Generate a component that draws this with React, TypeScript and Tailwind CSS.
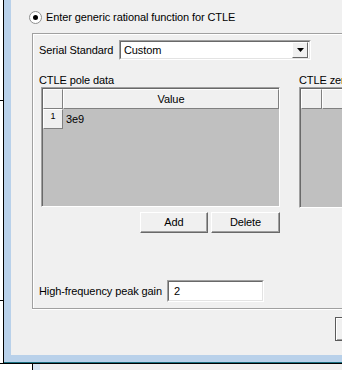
import React from 'react';

// sunken field border (classic Windows look)
const Sunken = ({ className, children }: { className: string; children?: React.ReactNode }) => (
  <div className={`shrink-0 border-t border-l border-[#a0a0a0] border-r border-b border-r-white border-b-white ${className}`}>
    <div className="w-full h-full border-t border-l border-[#696969] border-r border-b border-r-[#e3e3e3] border-b-[#e3e3e3] flex items-center">
      {children}
    </div>
  </div>
);

const Btn = ({ label, w }: { label: string; w: string }) => (
  <div className={`${w} h-[21px] shrink-0 border border-t-white border-l-white border-r-[#696969] border-b-[#696969] bg-[#f0f0f0] shadow-[inset_-1px_-1px_0_#a0a0a0] flex items-center justify-center`}>
    <span className="text-[11px] text-black">{label}</span>
  </div>
);

const HeadCell = ({ className, children }: { className: string; children?: React.ReactNode }) => (
  <div className={`shrink-0 bg-[#f0f0f0] border-t border-l border-white border-r border-b border-r-[#808080] border-b-[#808080] ${className}`}>
    {children}
  </div>
);

export default function App() {
  return (
    <div className="w-[342px] h-[370px] overflow-hidden bg-white font-['Liberation_Sans',Arial,sans-serif] text-[11px] tracking-[-0.1px] text-black flex flex-col">
      <div className="h-[363px] shrink-0 flex">
        {/* window behind, left of the dialog */}
        <div className="w-[3px] shrink-0 flex flex-col bg-white">
          <div className="h-[100px]" />
          <div className="h-px bg-black" />
          <div className="h-[199px]" />
          <div className="h-px bg-black" />
        </div>
        <div className="w-px shrink-0 bg-black" />
        <div className="flex-1 min-w-0 flex flex-col">
          <div className="h-[355px] flex">
            <div className="w-[7px] shrink-0 bg-[#b9d1ea]" />
            <div className="flex-1 min-w-0 bg-[#f0f0f0] overflow-hidden flex flex-col">
              {/* radio row */}
              <div className="mt-[11px] h-[13px] pl-[18px] flex items-center gap-[4px]">
                <div className="w-[13px] h-[13px] shrink-0 rounded-full border border-[#8e8f8f] bg-white flex items-center justify-center">
                  <div className="w-[5px] h-[5px] rounded-full bg-black" />
                </div>
                <span className="whitespace-nowrap">Enter generic rational function for CTLE</span>
              </div>

              {/* group box */}
              <div className="mt-[9px] ml-[21px] w-[340px] h-[276px] shrink-0 border border-[#a0a0a0] shadow-[inset_1px_1px_0_#fff,0_1px_0_#fff] flex flex-col">
                <div className="mt-[6px] pl-[6px] flex items-center">
                  <span className="w-[80px] shrink-0 whitespace-nowrap">Serial Standard</span>
                  <Sunken className="w-[192px] h-[20px] bg-white">
                    <span className="pl-[3px] flex-1">Custom</span>
                    <div className="w-[16px] h-[16px] mr-px bg-[#f0f0f0] border border-t-white border-l-white border-r-[#696969] border-b-[#696969] flex items-center justify-center">
                      <svg width="7" height="4" viewBox="0 0 7 4">
                        <path d="M0 0h7L3.5 4z" fill="#000" />
                      </svg>
                    </div>
                  </Sunken>
                </div>

                <div className="mt-[14px] pl-[6px] flex gap-[17px]">
                  {/* pole column */}
                  <div className="w-[243px] shrink-0 flex flex-col">
                    <div className="h-[13px] leading-[13px] whitespace-nowrap">CTLE pole data</div>
                    <div className="ml-[2px] w-[239px] h-[120px] border-t border-l border-[#a0a0a0] border-r border-b border-r-white border-b-white">
                      <div className="w-full h-full bg-[#c0c0c0] shadow-[inset_1px_1px_0_#696969] pt-px pl-px flex flex-col">
                        <div className="flex h-[20px]">
                          <HeadCell className="w-[20px] h-[20px]" />
                          <HeadCell className="w-[216px] h-[20px] flex items-center justify-center">Value</HeadCell>
                        </div>
                        <div className="flex h-[20px]">
                          <HeadCell className="w-[20px] h-[20px] text-[9px] leading-[9px] pt-[2px] text-center">1</HeadCell>
                          <div className="pl-[3px] flex items-center">3e9</div>
                        </div>
                      </div>
                    </div>
                    <div className="mt-[5px] flex justify-end gap-[3px] pr-[2px]">
                      <Btn label="Add" w="w-[68px]" />
                      <Btn label="Delete" w="w-[69px]" />
                    </div>
                  </div>
                  {/* zero column */}
                  <div className="w-[120px] shrink-0 flex flex-col">
                    <div className="h-[13px] leading-[13px] whitespace-nowrap">CTLE zero data</div>
                    <div className="w-[120px] h-[121px] border-t border-l border-[#a0a0a0] border-b border-b-white">
                      <div className="w-full h-full bg-[#c0c0c0] shadow-[inset_1px_1px_0_#696969] pt-px pl-px flex flex-col">
                        <div className="flex h-[20px]">
                          <HeadCell className="w-[21px] h-[20px]" />
                          <HeadCell className="w-[98px] h-[20px]" />
                        </div>
                      </div>
                    </div>
                  </div>
                </div>

                <div className="mt-[47px] pl-[6px] flex items-center">
                  <span className="w-[128px] shrink-0 whitespace-nowrap">High-frequency peak gain</span>
                  <Sunken className="w-[97px] h-[22px] bg-white">
                    <span className="pl-[5px]">2</span>
                  </Sunken>
                </div>
              </div>

              {/* dialog button, cut off at right */}
              <div className="mt-[8px] pl-[324px] flex">
                <div className="w-[75px] h-[24px] shrink-0 border border-[#5a5a5a] shadow-[inset_1px_1px_0_#fff,inset_-1px_-1px_0_#a0a0a0] bg-[#f0f0f0]" />
              </div>
            </div>
          </div>
          <div className="h-[7px] bg-[#b9d1ea]" />
          <div className="h-px bg-[#1a6f80]" />
        </div>
      </div>
      <div className="h-px shrink-0 bg-black" />
      {/* window behind, below */}
      <div className="flex-1 flex">
        <div className="w-[32px] shrink-0 bg-white" />
        <div className="w-px shrink-0 bg-black" />
        <div className="w-[7px] shrink-0 bg-[#d6e4f3]" />
        <div className="flex-1 bg-[#f0f0f0]" />
      </div>
    </div>
  );
}
